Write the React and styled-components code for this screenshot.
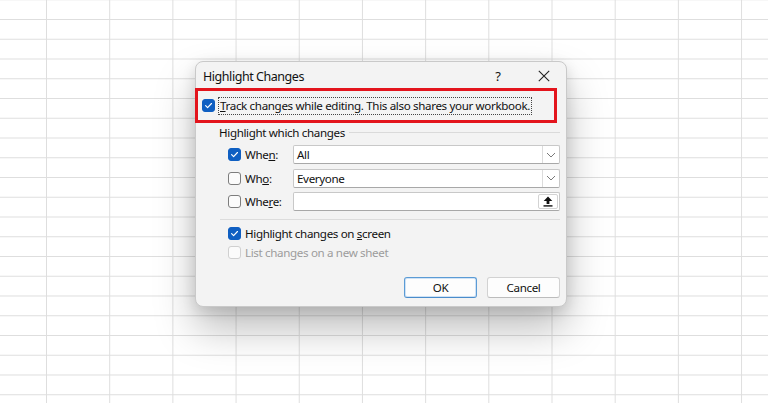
import React from "react";
import styled, { createGlobalStyle } from "styled-components";

const Global = createGlobalStyle`
  html, body { margin: 0; padding: 0; }
  body {
    width: 768px; height: 403px; overflow: hidden;
    font-family: "Noto Sans", "Open Sans", Arial, sans-serif;
    color: #111;
    letter-spacing: -0.35px;
  }
`;

const Sheet = styled.div`
  width: 768px;
  height: 403px;
  box-sizing: border-box;
  padding: 61px 0 0 195px;
  background-color: #fff;
  background-image:
    linear-gradient(to right, #dedede 1px, transparent 1px),
    linear-gradient(to bottom, #dedede 1px, transparent 1px);
  background-size: 63.2px 19.75px;
  background-position: 46px 19px;
`;

const Dialog = styled.div`
  position: relative;
  width: 372px;
  height: 246px;
  box-sizing: border-box;
  background: #f3f3f3;
  border: 1px solid #c9c9c9;
  border-radius: 8px;
  box-shadow: 0 22px 40px rgba(0, 0, 0, 0.26), 0 4px 14px rgba(0, 0, 0, 0.12);
  display: flex;
  flex-direction: column;
`;

const TitleBar = styled.div`
  height: 26px;
  display: flex;
  align-items: center;
  padding: 0 10px 0 7px;
`;

const Title = styled.div`
  flex: 1;
  font-size: 12.5px;
  letter-spacing: -0.45px;
  padding-top: 2px;
`;

const TitleButton = styled.div`
  width: ${(p) => p.$w}px;
  margin-left: ${(p) => p.$gap || 0}px;
  display: flex;
  justify-content: center;
  align-items: center;
  font-size: 13px;
  padding-top: 2px;
`;

const TrackRow = styled.div`
  height: 35px;
  display: flex;
  align-items: center;
  padding-left: 6px;
  gap: 3px;
`;

const Focus = styled.span`
  border: 1px dotted #444;
  padding: 0 1px;
  font-size: 11.6px;
  line-height: 16px;
`;

const Annot = styled.div`
  position: absolute;
  left: -1px;
  top: 26px;
  width: 362px;
  height: 35px;
  box-sizing: border-box;
  border: 3px solid #e3141c;
`;

const GroupHead = styled.div`
  height: 18px;
  display: flex;
  align-items: center;
  padding-left: 23px;
  padding-right: 6px;
  gap: 4px;
  font-size: 11.6px;
  &::after {
    content: "";
    flex: 1;
    height: 1px;
    background: #dadada;
    margin-top: 1px;
  }
`;

const Rows = styled.div`
  display: flex;
  flex-direction: column;
  gap: 4.5px;
  padding: 4px 6px 0 32px;
`;

const Row = styled.div`
  height: 19px;
  display: flex;
  align-items: center;
`;

const CheckLabel = styled.label`
  width: 65px;
  display: flex;
  align-items: center;
  gap: 4px;
  font-size: 11.6px;
`;

const Box = styled.span`
  width: 13px;
  height: 13px;
  box-sizing: border-box;
  border-radius: 3px;
  flex: none;
  display: flex;
  align-items: center;
  justify-content: center;
  background: ${(p) => (p.$checked ? "#0f5fc2" : "#fbfbfb")};
  border: 1px solid
    ${(p) => (p.$checked ? "#0f5fc2" : p.$disabled ? "#d0d0d0" : "#7d7d7d")};
`;

const Field = styled.div`
  flex: 1;
  height: 19px;
  box-sizing: border-box;
  background: #fff;
  border: 1px solid #c8c8c8;
  border-bottom-color: #a8a8a8;
  border-radius: 2px;
  display: flex;
  align-items: stretch;
  font-size: 11.6px;
`;

const FieldText = styled.div`
  flex: 1;
  display: flex;
  align-items: center;
  padding-left: 3px;
`;

const ArrowBtn = styled.div`
  width: 16px;
  border-left: 1px solid #dcdcdc;
  display: flex;
  align-items: center;
  justify-content: center;
`;

const RefBtn = styled.div`
  width: 18px;
  margin: 1px;
  border: 1px solid #d3d3d3;
  border-radius: 2px;
  display: flex;
  align-items: center;
  justify-content: center;
`;

const Separator = styled.div`
  height: 1px;
  background: #dcdcdc;
  margin: 8px 6px 0 24px;
`;

const Options = styled.div`
  display: flex;
  flex-direction: column;
  gap: 6px;
  padding: 7px 0 0 32px;
`;

const Option = styled.label`
  height: 13px;
  display: flex;
  align-items: center;
  gap: 4px;
  font-size: 11.6px;
  color: ${(p) => (p.$disabled ? "#9c9c9c" : "#111")};
`;

const Buttons = styled.div`
  margin-top: auto;
  display: flex;
  justify-content: flex-end;
  gap: 10px;
  padding: 0 6px 8px 0;
`;

const Button = styled.button`
  width: 73px;
  height: 21px;
  box-sizing: border-box;
  background: #fdfdfd;
  border: 1px solid ${(p) => (p.$primary ? "#5b9bd5" : "#d2d2d2")};
  box-shadow: ${(p) => (p.$primary ? "inset 0 0 0 1px #cfe2f5" : "none")};
  border-bottom-color: ${(p) => (p.$primary ? "#4a8ccb" : "#bcbcbc")};
  border-radius: 3px;
  font-family: "Noto Sans", "Open Sans", Arial, sans-serif;
  font-size: 11.6px;
  letter-spacing: -0.35px;
  color: #111;
  padding: 0;
`;

const Tick = () => (
  <svg width="9" height="9" viewBox="0 0 10 10">
    <path d="M1.8 5.2 L4 7.3 L8.3 2.8" fill="none" stroke="#fff" strokeWidth="1.3" strokeLinecap="round" strokeLinejoin="round" />
  </svg>
);

const Check = ({ checked, disabled }) => (
  <Box $checked={checked} $disabled={disabled}>{checked && <Tick />}</Box>
);

const Chevron = () => (
  <svg width="10" height="6" viewBox="0 0 10 6">
    <path d="M1 1 L5 5 L9 1" fill="none" stroke="#7a7a7a" strokeWidth="1" />
  </svg>
);

const UploadIcon = () => (
  <svg width="10" height="11" viewBox="0 0 10 11">
    <path d="M5 0.5 L9.3 5 L6.4 5 L6.4 8 L3.6 8 L3.6 5 L0.7 5 Z" fill="#111" />
    <rect x="0.5" y="9.2" width="9" height="1.4" fill="#111" />
  </svg>
);

const CloseIcon = () => (
  <svg width="12" height="12" viewBox="0 0 12 12">
    <path d="M0.8 0.8 L11.2 11.2 M11.2 0.8 L0.8 11.2" stroke="#222" strokeWidth="1.1" />
  </svg>
);

const U = styled.span`
  text-decoration: underline;
  text-underline-offset: 1px;
`;

export default function App() {
  return (
    <>
      <Global />
      <Sheet>
        <Dialog>
          <TitleBar>
            <Title>Highlight Changes</Title>
            <TitleButton $w={20}>?</TitleButton>
            <TitleButton $w={24} $gap={24}>
              <CloseIcon />
            </TitleButton>
          </TitleBar>
          <TrackRow>
            <Check checked />
            <Focus>
              <U>T</U>rack changes while editing. This also shares your workbook.
            </Focus>
          </TrackRow>
          <Annot />
          <GroupHead>Highlight which changes</GroupHead>
          <Rows>
            <Row>
              <CheckLabel>
                <Check checked />
                <span>Whe<U>n</U>:</span>
              </CheckLabel>
              <Field>
                <FieldText>All</FieldText>
                <ArrowBtn><Chevron /></ArrowBtn>
              </Field>
            </Row>
            <Row>
              <CheckLabel>
                <Check />
                <span>Wh<U>o</U>:</span>
              </CheckLabel>
              <Field>
                <FieldText>Everyone</FieldText>
                <ArrowBtn><Chevron /></ArrowBtn>
              </Field>
            </Row>
            <Row>
              <CheckLabel>
                <Check />
                <span>Whe<U>r</U>e:</span>
              </CheckLabel>
              <Field>
                <FieldText />
                <RefBtn><UploadIcon /></RefBtn>
              </Field>
            </Row>
          </Rows>
          <Separator />
          <Options>
            <Option>
              <Check checked />
              <span>Highlight changes on <U>s</U>creen</span>
            </Option>
            <Option $disabled>
              <Check disabled />
              <span>List changes on a new sheet</span>
            </Option>
          </Options>
          <Buttons>
            <Button $primary>OK</Button>
            <Button>Cancel</Button>
          </Buttons>
        </Dialog>
      </Sheet>
    </>
  );
}
